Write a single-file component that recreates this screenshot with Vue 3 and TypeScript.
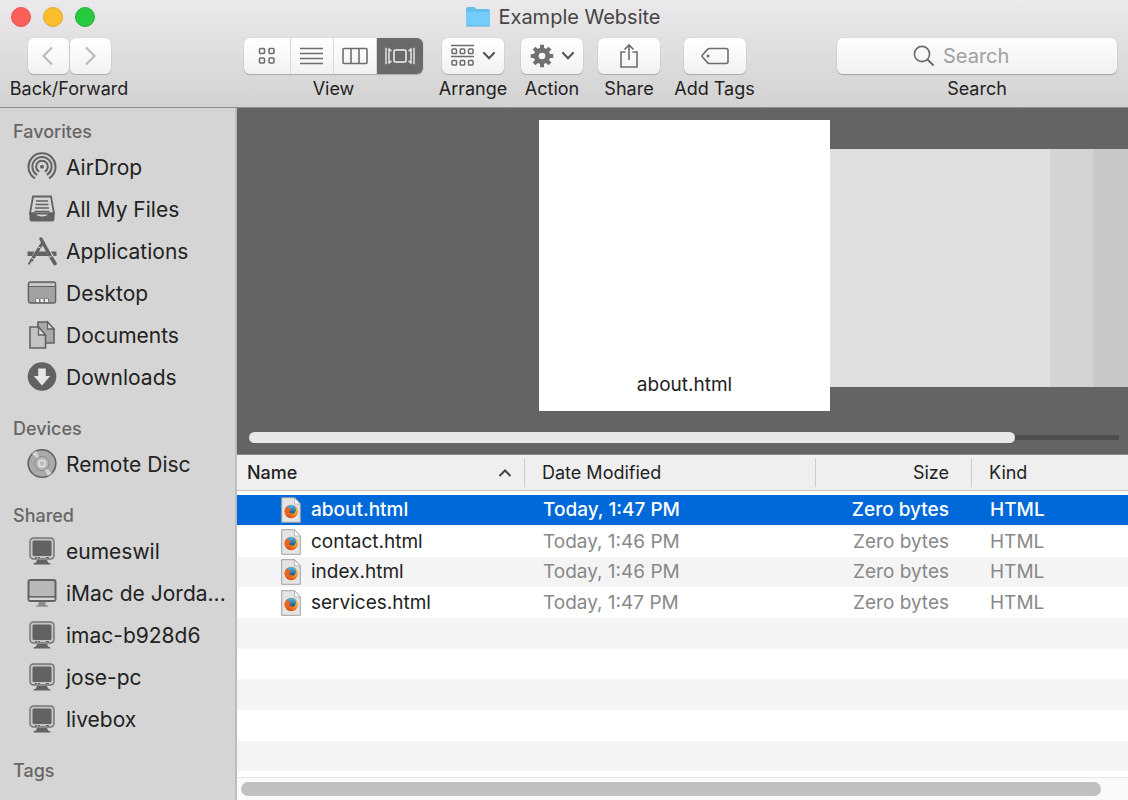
<script setup lang="ts">
import { ref } from 'vue'

interface SidebarItem { label: string; icon: string }
interface SidebarSection { title: string; items: SidebarItem[] }
interface FileRow { name: string; modified: string; size: string; kind: string }

const sections: SidebarSection[] = [
  {
    title: 'Favorites',
    items: [
      { label: 'AirDrop', icon: 'airdrop' },
      { label: 'All My Files', icon: 'files' },
      { label: 'Applications', icon: 'apps' },
      { label: 'Desktop', icon: 'desktop' },
      { label: 'Documents', icon: 'documents' },
      { label: 'Downloads', icon: 'downloads' },
    ],
  },
  { title: 'Devices', items: [{ label: 'Remote Disc', icon: 'disc' }] },
  {
    title: 'Shared',
    items: [
      { label: 'eumeswil', icon: 'pc' },
      { label: 'iMac de Jorda...', icon: 'imac' },
      { label: 'imac-b928d6', icon: 'pc' },
      { label: 'jose-pc', icon: 'pc' },
      { label: 'livebox', icon: 'pc' },
    ],
  },
  { title: 'Tags', items: [] },
]

const files: FileRow[] = [
  { name: 'about.html', modified: 'Today, 1:47 PM', size: 'Zero bytes', kind: 'HTML' },
  { name: 'contact.html', modified: 'Today, 1:46 PM', size: 'Zero bytes', kind: 'HTML' },
  { name: 'index.html', modified: 'Today, 1:46 PM', size: 'Zero bytes', kind: 'HTML' },
  { name: 'services.html', modified: 'Today, 1:47 PM', size: 'Zero bytes', kind: 'HTML' },
]

const selected = ref('about.html')
const view = ref('flow')
const query = ref('')
</script>

<template>
  <div class="window">
    <header class="chrome">
      <div class="titlebar">
        <div class="lights">
          <button class="light close" aria-label="Close"></button>
          <button class="light minimise" aria-label="Minimise"></button>
          <button class="light zoom" aria-label="Zoom"></button>
        </div>
        <h1 class="title">
          <svg width="26" height="22" viewBox="0 0 26 22" aria-hidden="true">
            <path d="M1 3.2Q1 1 3 1h5.5q1.2 0 1.8.9l.7 1H23q2 0 2 2V8H1z" fill="#62bfee" />
            <path d="M1 6h24v12.500q0 1.500-1.500 1.500h-21Q1 20 1 18.500z" fill="#72cdfa" />
            <path d="M1.500 20h23" stroke="#58aedb" />
          </svg>
          <span>Example Website</span>
        </h1>
      </div>

      <div class="toolbar">
        <div class="tool nav">
          <div class="pair">
            <button class="btn" aria-label="Back">
              <svg width="16" height="22" viewBox="0 0 16 22"><path d="M12 2.500 3.500 11l8.500 8.500" fill="none" stroke="#bcbcbc" stroke-width="2.200" /></svg>
            </button>
            <button class="btn" aria-label="Forward">
              <svg width="16" height="22" viewBox="0 0 16 22"><path d="M4 2.500 12.500 11 4 19.500" fill="none" stroke="#bcbcbc" stroke-width="2.200" /></svg>
            </button>
          </div>
          <span class="caption">Back/Forward</span>
        </div>

        <div class="tool view">
          <div class="segments">
            <button :class="{ on: view === 'icons' }" aria-label="Icons" @click="view = 'icons'">
              <svg width="18" height="18" viewBox="0 0 18 18" fill="none" stroke="currentColor" stroke-width="1.600">
                <rect x="1.500" y="1.500" width="5" height="5" rx="1" /><rect x="11" y="1.500" width="5" height="5" rx="1" />
                <rect x="1.500" y="11" width="5" height="5" rx="1" /><rect x="11" y="11" width="5" height="5" rx="1" />
              </svg>
            </button>
            <button :class="{ on: view === 'list' }" aria-label="List" @click="view = 'list'">
              <svg width="24" height="18" viewBox="0 0 24 18" stroke="currentColor" stroke-width="1.500"><path d="M0 1.500h23M0 6.500h23M0 11.500h23M0 16.500h23" /></svg>
            </button>
            <button :class="{ on: view === 'columns' }" aria-label="Columns" @click="view = 'columns'">
              <svg width="26" height="18" viewBox="0 0 26 18" fill="none" stroke="currentColor" stroke-width="1.600"><rect x="1" y="1.500" width="24" height="15" rx="1" /><path d="M9 1.500v15M17 1.500v15" /></svg>
            </button>
            <button :class="{ on: view === 'flow' }" aria-label="Cover Flow" @click="view = 'flow'">
              <svg width="30" height="18" viewBox="0 0 30 18" fill="none" stroke="currentColor" stroke-width="1.500">
                <rect x="9" y="3" width="12" height="12" rx="1.500" />
                <path d="M1 .8v16.400M29 .8v16.400" stroke-width="1.300" />
                <path d="M4 1.200v15.600M26 1.200v15.600" stroke-width="1.400" />
                <path d="M4 2.200 6.600 4M4 15.800 6.600 14M26 2.200 23.400 4M26 15.800 23.400 14" stroke-width="1.200" />
              </svg>
            </button>
          </div>
          <span class="caption">View</span>
        </div>

        <div class="tool arrange">
          <button class="btn" aria-label="Arrange">
            <svg width="24" height="24" viewBox="0 0 24 24" fill="none" stroke="currentColor" stroke-width="1.500">
              <path d="M0 1.500h23M0 12.500h23" />
              <rect x="1" y="5" width="4.500" height="4.500" rx=".8" /><rect x="9.200" y="5" width="4.500" height="4.500" rx=".8" /><rect x="17.500" y="5" width="4.500" height="4.500" rx=".8" />
              <rect x="1" y="16.500" width="4.500" height="4.500" rx=".8" /><rect x="9.200" y="16.500" width="4.500" height="4.500" rx=".8" /><rect x="17.500" y="16.500" width="4.500" height="4.500" rx=".8" />
            </svg>
            <svg width="14" height="10" viewBox="0 0 14 10"><path d="M2 2l5 5.200L12 2" fill="none" stroke="#555" stroke-width="2.200" stroke-linecap="round" /></svg>
          </button>
          <span class="caption">Arrange</span>
        </div>

        <div class="tool">
          <button class="btn" aria-label="Action">
            <svg width="24" height="24" viewBox="0 0 24 24" fill="none" stroke="#707070">
              <circle cx="12" cy="12" r="5.800" stroke-width="5" />
              <path d="M12 .8v4M12 19.200v4M.8 12h4M19.200 12h4M4.100 4.100 7 7M17 17l2.900 2.900M19.900 4.100 17 7M7 17l-2.900 2.900" stroke-width="4" />
            </svg>
            <svg width="14" height="10" viewBox="0 0 14 10"><path d="M2 2l5 5.200L12 2" fill="none" stroke="#555" stroke-width="2.200" stroke-linecap="round" /></svg>
          </button>
          <span class="caption">Action</span>
        </div>

        <div class="tool">
          <button class="btn" aria-label="Share">
            <svg width="20" height="26" viewBox="0 0 20 26" fill="none" stroke="currentColor" stroke-width="1.600"><path d="M6.500 9H2v15h16V9h-4.500M10 17V2M5.500 6.500 10 2l4.500 4.500" /></svg>
          </button>
          <span class="caption">Share</span>
        </div>

        <div class="tool tags">
          <button class="btn" aria-label="Add Tags">
            <svg width="28" height="18" viewBox="0 0 28 18" fill="none" stroke="currentColor" stroke-width="1.600"><path d="M8.500 1.500H25q2 0 2 2v11q0 2-2 2H8.500q-1.200 0-2-.9L1.300 9.800q-.6-.8 0-1.600L6.500 2.400q.8-.9 2-.9z" /><circle cx="7" cy="9" r="1.500" fill="currentColor" stroke="none" /></svg>
          </button>
          <span class="caption">Add Tags</span>
        </div>

        <div class="tool search">
          <div class="field">
            <svg width="22" height="22" viewBox="0 0 22 22" fill="none" stroke="#6c6c6c" stroke-width="1.600"><circle cx="9" cy="9" r="7.600" /><path d="m14.500 14.500 6 6" stroke-width="2" /></svg>
            <input id="search" v-model="query" type="text" placeholder="Search" />
          </div>
          <label class="caption" for="search">Search</label>
        </div>
      </div>
    </header>

    <div class="body">
      <nav class="sidebar">
        <section v-for="s in sections" :key="s.title">
          <h2>{{ s.title }}</h2>
          <a v-for="i in s.items" :key="i.label" href="#">
            <svg width="30" height="30" viewBox="0 0 30 30" fill="none" stroke="#626262" stroke-width="1.600" aria-hidden="true">
              <template v-if="i.icon === 'airdrop'">
                <path d="M8 26.400a13.500 13.500 0 1 1 14 0M10.200 22.900a9.600 9.600 0 1 1 9.600 0M12.200 19.700a5.800 5.800 0 1 1 5.600 0" stroke-width="2" />
                <circle cx="15" cy="14.800" r="2" fill="#626262" stroke="none" />
              </template>
              <template v-else-if="i.icon === 'files'">
                <path d="M6 2.500h18l3 17H3z" stroke-width="1.800" />
                <path d="M9 7h12M8.500 10.500h13M8 14h14M7.500 17.500h15" />
                <path d="M2.500 18.500H8q1.500 4 7 4t7-4h5.500V25q0 2.500-2.500 2.500H5Q2.500 27.500 2.500 25z" fill="#626262" stroke="none" />
              </template>
              <template v-else-if="i.icon === 'apps'">
                <path d="M.5 15.500h7L5 20H.5zM11.500 15.500h7.500l2.500 4.500H9zM24 15.500h5.500V20h-3z" fill="#626262" stroke="none" />
                <path d="M16.500 5.500 4 25" stroke-width="3.200" /><path d="M4 24.500 1.500 28.500" stroke-width="1.800" />
                <path d="M14 3 24.500 22" stroke-width="3.400" stroke-linecap="round" /><path d="m24.500 22 3.500 5.500" stroke-width="3.600" stroke-linecap="round" />
                <path d="M10.500 10.500l5 2.500M22 21.500l4.500-2.600M4 21.500l4.500 2.600" stroke="#d5d5d5" stroke-width="1" />
              </template>
              <template v-else-if="i.icon === 'desktop'">
                <rect x="1.400" y="4" width="27.200" height="21" rx="2" fill="#a2a2a2" stroke-width="1.400" />
                <path d="M2.500 5.200h25V8h-25z" fill="#c8c8c8" stroke="none" /><path d="M1.500 8.500h27" stroke-width="1" />
                <path d="M8 24.500v-4h14v4z" fill="#777" stroke="none" />
                <path d="M9 21h3v3H9zM13.500 21h3v3h-3zM18 21h3v3h-3z" fill="#f0f0f0" stroke="none" />
              </template>
              <template v-else-if="i.icon === 'documents'">
                <path d="M11 2h9.500l6.500 7v14H11z" fill="#a8a8a8" /><path d="M20.500 2v7H27z" fill="#ddd" stroke-width="1.300" />
                <path d="M3 7h8.500l7 8v13H3z" fill="#c4c4c4" /><path d="M11.500 7v8h7z" fill="#ddd" stroke-width="1.300" />
              </template>
              <template v-else-if="i.icon === 'downloads'">
                <circle cx="15" cy="14.500" r="14.300" fill="#626262" stroke="none" />
                <path d="M11.200 6.500h7.600V14h4.400L15 23.500 6.800 14h4.400z" fill="#e6e6e6" stroke="none" />
              </template>
              <template v-else-if="i.icon === 'disc'">
                <circle cx="15" cy="14.500" r="13.800" fill="#aaa" />
                <path d="M15 14.500 5.200 4.800A14 14 0 0 1 9.500 2zM15 14.500l9.800 9.700a14 14 0 0 1-4.300 2.800z" fill="#d2d2d2" stroke="none" />
                <circle cx="15" cy="14.500" r="7" fill="#b5b5b5" stroke="#8a8a8a" stroke-width="1" />
                <circle cx="15" cy="14.500" r="3.200" fill="#bababa" stroke="#e2e2e2" />
              </template>
              <template v-else-if="i.icon === 'pc'">
                <rect x="3" y="2" width="24" height="21" rx="3.500" fill="#c6c6c6" stroke="#737373" stroke-width="1.400" />
                <rect x="5.500" y="4.500" width="19" height="15.500" rx="1.500" fill="#626262" stroke="none" />
                <path d="M8 21.500h2M11 21.500h2M19 21.500h3" stroke-width="1.200" />
                <path d="M10 24h10l1 2.500 2.500 1v1h-17v-1l2.500-1z" fill="#626262" stroke="none" />
              </template>
              <template v-else>
                <path d="M12 23h6l1 4.500h2v1.300H9v-1.300h2z" fill="#8a8a8a" stroke="none" />
                <rect x="1.500" y="2" width="27" height="21" rx="2" fill="#b8b8b8" stroke-width="2" />
                <path d="M2.500 19.500h25V22h-25z" fill="#d8d8d8" stroke="none" /><path d="M2 18.800h26" stroke-width="1.500" />
              </template>
            </svg>
            <span>{{ i.label }}</span>
          </a>
        </section>
      </nav>

      <main class="content">
        <div class="preview">
          <div class="covers">
            <div class="cover">{{ selected }}</div>
            <div class="stack"><i></i><i></i><i></i></div>
          </div>
          <div class="slider"><div class="handle"></div></div>
        </div>

        <table>
          <colgroup><col class="c-name" /><col class="c-date" /><col class="c-size" /><col /></colgroup>
          <thead>
            <tr>
              <th>
                <div class="head"><button class="strong">Name
                  <svg width="14" height="10" viewBox="0 0 14 10"><path d="M1.500 8 7 2.500 12.500 8" fill="none" stroke="#444" stroke-width="2" /></svg>
                </button></div>
              </th>
              <th><div class="head"><button>Date Modified</button></div></th>
              <th class="num"><div class="head"><button>Size</button></div></th>
              <th><div class="head"><button>Kind</button></div></th>
            </tr>
          </thead>
          <tbody>
            <tr v-for="f in files" :key="f.name" :class="{ selected: f.name === selected }" @click="selected = f.name">
              <td class="name">
                <div class="file">
                  <svg width="20" height="26" viewBox="0 0 20 26" aria-hidden="true">
                    <defs>
                      <radialGradient id="fox" cx=".75" cy=".4" r=".75"><stop offset="0" stop-color="#ffcf3a" /><stop offset=".5" stop-color="#f3821e" /><stop offset="1" stop-color="#cc3d14" /></radialGradient>
                      <linearGradient id="globe" x1="0" y1="0" x2="0" y2="1"><stop offset="0" stop-color="#4cc0ee" /><stop offset="1" stop-color="#174a86" /></linearGradient>
                    </defs>
                    <path d="M.7.700h12.800L19.300 7v18.300H.7z" fill="#e4e4e4" stroke="#a0a0a0" />
                    <path d="M13.500.700V7h5.800z" fill="#fff" stroke="#a8a8a8" stroke-width=".8" />
                    <circle cx="10.300" cy="14.500" r="6.700" fill="url(#fox)" />
                    <circle cx="10.300" cy="12.600" r="4.700" fill="url(#globe)" />
                    <path d="M3.700 14q.2-2.400 1.700-4.500.5 1.500 2.300 1.800 2-.4 2.700.6-.2 1.100-1.700 1.600-.6.700-.1 1.700 1.200 1.300 3.600.6-.8 2.200-3.400 2.200l-2.500 1Q3.500 17.500 3.700 14z" fill="#e8661c" />
                  </svg>
                  <span>{{ f.name }}</span>
                </div>
              </td>
              <td>{{ f.modified }}</td>
              <td class="num">{{ f.size }}</td>
              <td>{{ f.kind }}</td>
            </tr>
            <tr v-for="n in 5" :key="n" class="empty"><td colspan="4"></td></tr>
          </tbody>
        </table>

        <div class="hscroll"><div class="thumb"></div></div>
      </main>
    </div>
  </div>
</template>

<style>
body { background: #fff; }
</style>

<style scoped>
* { box-sizing: border-box; }
button { font: inherit; color: inherit; padding: 0; border: 0; background: none; }
svg { display: block; flex: none; }
.window { min-height: 100vh; display: flex; flex-direction: column; font-family: Inter, "Liberation Sans", sans-serif; color: #222; overflow: hidden; }

.chrome { background: linear-gradient(#ebe9eb, #d3d2d3); border-bottom: 1px solid #8f8f8f; padding-bottom: 6px; }
.titlebar { display: grid; grid-template-columns: 1fr auto 1fr; align-items: center; height: 33px; padding: 0 13px 0 11px; }
.lights { display: flex; gap: 12px; }
.light { width: 20px; height: 20px; border-radius: 50%; border: 1px solid; }
.close { background: #fc5f57; border-color: #e5524b; }
.minimise { background: #fdbe2e; border-color: #e2a62a; }
.zoom { background: #27c93f; border-color: #22b035; }
.title { display: flex; align-items: center; gap: 7px; margin: 0; font-size: 20px; font-weight: 400; color: #444; }

.toolbar { display: flex; align-items: flex-start; gap: 15px; padding: 5px 11px 0; }
.tool { display: flex; flex-direction: column; align-items: center; min-width: 62px; }
.nav { width: 116px; }
.view { margin: 0 2px 0 102px; }
.arrange { width: 66px; }
.tags { width: 79px; }
.search { flex: 0 1 280px; margin-left: auto; align-items: stretch; text-align: center; }
.caption { font-size: 18px; line-height: 24px; margin-top: 3px; white-space: nowrap; }
.pair { display: flex; gap: 1px; }
.btn { display: flex; align-items: center; justify-content: center; gap: 7px; width: 62px; height: 36px; border-radius: 6px; background: linear-gradient(#fff, #f2f2f2); box-shadow: 0 0 1px rgba(0, 0, 0, 0.25), 0 1px 1px rgba(0, 0, 0, 0.2); color: #6e6e6e; }
.pair .btn { width: 41px; }
.segments { display: flex; width: 179px; height: 36px; border-radius: 6px; overflow: hidden; background: linear-gradient(#fff, #f2f2f2); box-shadow: 0 0 1px rgba(0, 0, 0, 0.25), 0 1px 1px rgba(0, 0, 0, 0.2); color: #6e6e6e; }
.segments button { flex: 0 0 43px; display: flex; align-items: center; justify-content: center; border-right: 1px solid #d8d8d8; }
.segments button:first-child { flex-basis: 47px; }
.segments button:last-child { flex: 1; border-right: 0; }
.segments .on { background: #6a6a6a; color: #f4f4f4; }
.field { display: flex; align-items: center; gap: 8px; height: 36px; padding-left: 76px; border-radius: 6px; background: linear-gradient(#fdfdfd, #f1f1f1); box-shadow: 0 0 1px rgba(0, 0, 0, 0.25), 0 1px 1px rgba(0, 0, 0, 0.25); }
.field input { flex: 1; min-width: 0; border: 0; padding: 0; background: none; outline: 0; font: inherit; font-size: 20px; color: #333; }
.field input::placeholder { color: #a0a0a0; opacity: 1; }

.body { flex: 1; display: flex; }
.sidebar { flex: none; width: 237px; padding: 9px 0 0 13px; background: #d5d5d5; border-right: 2px solid #bdbdbd; }
.sidebar section + section { margin-top: 16px; }
.sidebar h2 { margin: 0; font-size: 18px; font-weight: 500; line-height: 29px; color: #666; }
.sidebar a { display: flex; align-items: center; gap: 9px; height: 42px; padding-left: 14px; color: #222; text-decoration: none; font-size: 21px; white-space: nowrap; }

.content { flex: 1; min-width: 0; display: flex; flex-direction: column; }
.preview { background: #646464; padding: 12px 0 11px; border-bottom: 1px solid #8a8a8a; }
.covers { display: grid; grid-template-columns: 1fr 291px 1fr; align-items: center; padding-left: 4px; }
.cover { grid-column: 2; height: 291px; display: flex; align-items: flex-end; justify-content: center; padding-bottom: 14px; background: #fff; font-size: 19px; line-height: 24px; color: #222; }
.stack { display: flex; height: 238px; margin-top: 5px; }
.stack i { flex: 0 0 43px; background: #d4d4d4; }
.stack i:first-child { flex: 1; background: #e0e0e0; }
.stack i:last-child { flex-basis: 35px; background: #c8c8c8; }
.slider { margin: 21px 9px 0 12px; background: linear-gradient(#4e4e4e, #4e4e4e) center / 100% 5px no-repeat; }
.handle { width: 88%; height: 11px; border-radius: 6px; background: #e8e8e8; }

table { width: 100%; table-layout: fixed; border-spacing: 0; font-size: 19px; color: #888; }
.c-name { width: 288px; }
.c-date { width: 291px; }
.c-size { width: 156px; }
th { padding: 0 0 4px; font-weight: 400; text-align: left; color: #222; }
.head { padding: 3px 0; background: #efefef; border-bottom: 1px solid #c0c0c0; }
.head button { display: flex; align-items: center; justify-content: space-between; width: 100%; height: 29px; padding: 0 12px 0 17px; border-right: 1px solid #ccc; font-size: 18px; }
th:last-child button { border-right: 0; }
.head .strong { padding-left: 10px; font-weight: 500; }
.num .head button { justify-content: flex-end; padding-right: 22px; }
td { height: 31px; padding: 0 0 0 18px; line-height: 24px; white-space: nowrap; }
tr:nth-child(3n) td { height: 30px; }
td.num { padding: 0 23px 0 0; text-align: right; }
td.name { padding-left: 44px; color: #222; }
.file { display: flex; align-items: center; gap: 10px; }
tbody tr:nth-child(odd) { background: #f4f4f4; }
tbody tr.selected { background: #fff; }
.selected td, .selected td.name { color: #fff; font-weight: 500; background: #0069d9; border-bottom: 1px solid #f4f4f4; }

.hscroll { margin-top: auto; height: 23px; padding: 4px 27px 0 4px; background: #fafafa; border-top: 1px solid #e6e6e6; }
.thumb { height: 14px; border-radius: 7px; background: #c0c0c0; }
</style>
